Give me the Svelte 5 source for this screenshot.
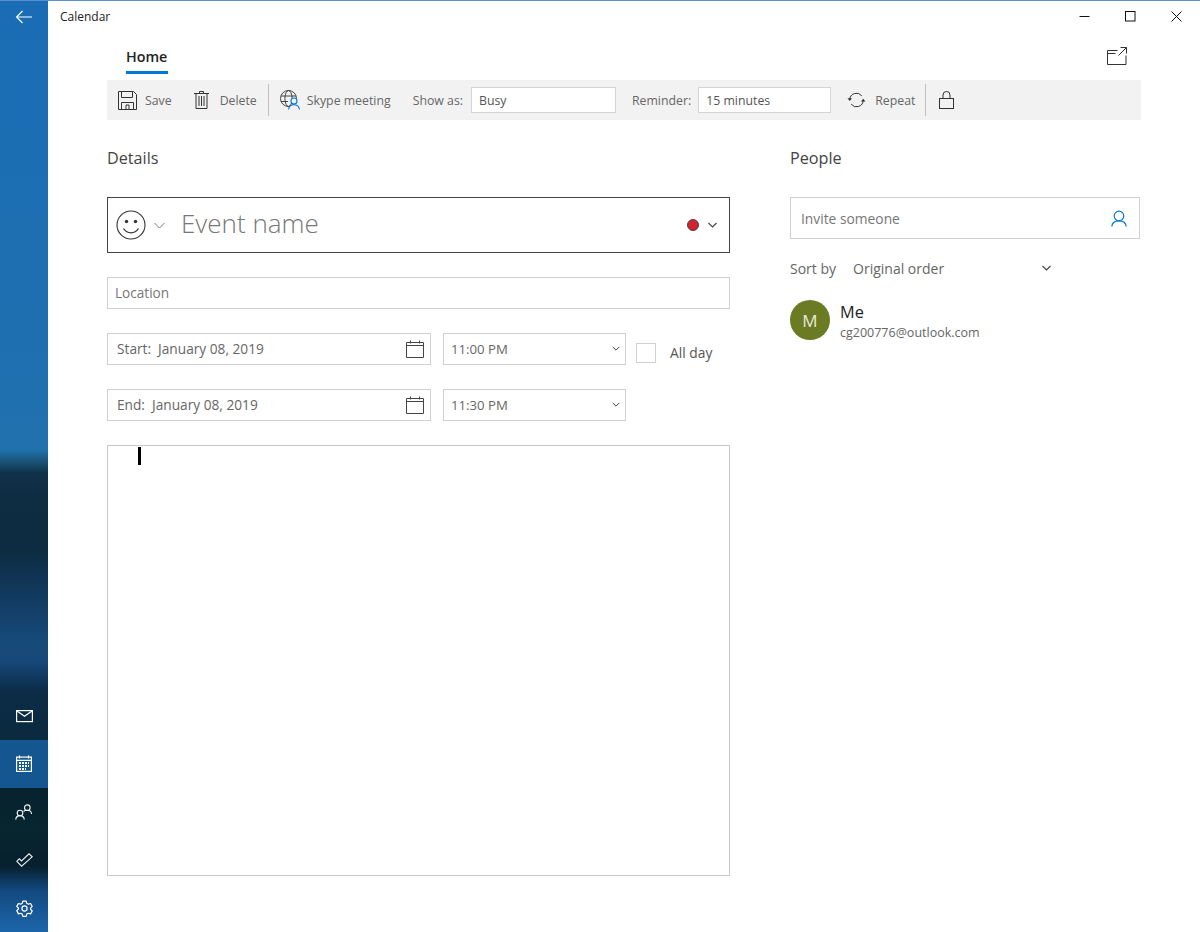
<script>
  const nav = ['mail', 'calendar', 'people', 'tasks', 'settings'];
</script>

<div class="window">
  <aside class="rail">
    <button class="rail-btn back" aria-label="Back">
      <svg width="18" height="14" viewBox="0 0 18 14" fill="none" stroke="#fff" stroke-width="1.1"><path d="M17 7H1.5M7.5 1L1.5 7l6 6" /></svg>
    </button>
    <div class="rail-space"></div>
    {#each nav as item}
      <button class="rail-btn" class:active={item === 'calendar'} aria-label={item}>
        {#if item === 'mail'}
          <svg width="17" height="13" viewBox="0 0 17 13" fill="none" stroke="#fff" stroke-width="1.200"><rect x=".6" y=".6" width="15.800" height="11" /><path d="M1 1l7.500 5.300L16 1" /></svg>
        {:else if item === 'calendar'}
          <svg width="16" height="18" viewBox="0 0 16 18" fill="none" stroke="#fff" stroke-width="1.2"><rect x=".6" y="2.1" width="14.8" height="14.3" /><path d="M.6 5.4h14.8M3.5.5v3M12.5.5v3" /><path stroke-width="2" stroke-dasharray="2 1" d="M3 8h10M3 11h10M3 14h7" /></svg>
        {:else if item === 'people'}
          <svg width="18" height="16" viewBox="0 0 18 16" fill="none" stroke="#eef3f5" stroke-width="1.1"><circle cx="5" cy="9" r="2.8" /><path d="M.7 15.600c.3-2.600 2-4 4.300-4s4 1.400 4.300 4" /><circle cx="12.300" cy="3.700" r="2.800" /><path d="M8.500 7.500c.8-.7 2.200-1.200 3.800-1.200 2.300 0 4 1.400 4.300 3.700" /></svg>
        {:else if item === 'tasks'}
          <svg width="17" height="14" viewBox="0 0 17 14" fill="none" stroke="#eef3f5" stroke-width="1.100"><path d="M.8 8.300l2.500-2.500 2.200 2.200L13 .8l3.200 3L5.600 13.200z" /></svg>
        {:else}
          <svg width="17" height="17" viewBox="0 0 24 24" fill="none" stroke="#fff" stroke-width="1.7" stroke-linejoin="round"><circle cx="12" cy="12" r="3.6" /><path d="M9.6 1.5h4.8l.8 3.2 2.2 1.2 3.2-.9 2.3 4.1-2.3 2.3v1.8l2.3 2.3-2.3 4.1-3.2-.9-2.2 1.2-.8 3.2H9.6l-.8-3.2-2.2-1.2-3.2.9L1.100 15l2.300-2.300v-1.400L1.100 9l2.300-4 3.200.9 2.200-1.200z" /></svg>
        {/if}
      </button>
    {/each}
  </aside>

  <main class="main">
    <header class="titlebar">
      <span class="app-title">Calendar</span>
      <div class="win-controls">
        <svg width="11" height="11" viewBox="0 0 11 11" stroke="#111" fill="none"><path d="M.5 5.500h10" /></svg>
        <svg width="11" height="11" viewBox="0 0 11 11" stroke="#111" fill="none"><rect x=".5" y=".5" width="9.500" height="9.500" /></svg>
        <svg width="11" height="11" viewBox="0 0 11 11" stroke="#111" fill="none"><path d="M.5.500l10 10M10.500.500l-10 10" /></svg>
      </div>
    </header>

    <div class="content">
      <div class="tab-row">
        <span class="tab">Home</span>
        <svg class="popout" width="20" height="18" viewBox="0 0 20 18" fill="none" stroke="#333"><path d="M19 8.500V17.500H.5V3.500h10M.5 6.500h8M13.500.5H19.500V6.500M19.500.5l-8 8" /></svg>
      </div>

      <div class="toolbar">
        <span class="tool save">
          <svg width="19" height="19" viewBox="0 0 19 19" fill="none" stroke="#333"><path d="M.5.500h15l3 3v15H.5zM3.500.5v6h11v-6M3.500 18.500v-7h12v7M8 14h3v4.500H8z" /></svg>
          Save
        </span>
        <span class="tool delete">
          <svg width="15" height="18" viewBox="0 0 15 18" fill="none" stroke="#333"><path d="M0 2.500h15M2 2.500v15h11v-15M5.500 2.500V.5h4v2M5 5v10M7.500 5v10M10 5v10" /></svg>
          Delete
        </span>
        <span class="sep"></span>
        <span class="tool skype">
          <svg width="21" height="20" viewBox="0 0 21 20" fill="none" stroke="#333" stroke-width=".9"><circle cx="8.500" cy="8.500" r="8" /><ellipse cx="8.500" cy="8.500" rx="3.600" ry="8" /><path d="M1 6h15M1 11.500h7" /><circle cx="14" cy="11" r="3" fill="#f2f2f2" stroke="#0078d7" stroke-width="1.100" /><path d="M8.500 19.500c.4-3 2.500-4.800 5.500-4.800s5 1.800 5.500 4.800" fill="#f2f2f2" stroke="#0078d7" stroke-width="1.100" /></svg>
          Skype meeting
        </span>
        <label class="field-label show-label" for="show-as">Show as:</label>
        <input id="show-as" class="tool-input show-input" value="Busy" readonly />
        <label class="field-label rem-label" for="reminder">Reminder:</label>
        <input id="reminder" class="tool-input rem-input" value="15 minutes" readonly />
        <span class="tool repeat">
          <svg width="19" height="16" viewBox="0 0 19 16" fill="none" stroke="#333"><path d="M2.800 8a6.700 6.700 0 0 1 12-4.200M16.200 8a6.700 6.700 0 0 1-12 4.200" /><path d="M.5 6.200h4.500L2.800 9zM14 9.500h4.500L16.200 6.700z" fill="#333" stroke="none" /></svg>
          Repeat
        </span>
        <span class="sep sep2"></span>
        <svg class="lock" width="15" height="18" viewBox="0 0 15 18" fill="none" stroke="#333"><rect x=".5" y="7.500" width="14" height="10" /><path d="M4 7.500V4a3.500 3.500 0 0 1 7 0v3.500" /></svg>
      </div>

      <div class="columns">
        <section class="details">
          <h2>Details</h2>
          <div class="event-box">
            <svg width="30" height="30" viewBox="0 0 30 30" fill="none" stroke="#333" stroke-width="1.100"><circle cx="15" cy="15" r="14" /><circle cx="10.500" cy="11.500" r="1.700" fill="#333" stroke="none" /><circle cx="19.500" cy="11.500" r="1.700" fill="#333" stroke="none" /><path d="M7.500 18.500c2 3 4.500 4.300 7.500 4.300s5.500-1.300 7.500-4.300" stroke-width="1.300" /></svg>
            <svg class="chev-big" width="11" height="7" viewBox="0 0 11 7" fill="none" stroke="#777" stroke-width="1"><path d="M.5 1l5 5 5-5" /></svg>
            <span class="event-name">Event name</span>
            <span class="dot"></span>
            <svg class="chev-dot" width="9" height="6" viewBox="0 0 9 6" fill="none" stroke="#444" stroke-width="1.100"><path d="M.5 1l4 4 4-4" /></svg>
          </div>
          <div class="location">Location</div>

          <div class="date-row">
            <div class="date-field">
              <span class="date-prefix">Start:</span><span class="date-value">January 08, 2019</span>
              <svg class="cal" width="18" height="18" viewBox="0 0 18 18" fill="none" stroke="#444"><path d="M.5 2.500h17v15H.5zM.5 5.500h17M4.500.5v3M13.500.5v3" /></svg>
            </div>
            <div class="time-field">11:00 PM
              <svg class="chev-time" width="8" height="5" viewBox="0 0 9 6" fill="none" stroke="#444" stroke-width="1.200"><path d="M.5 1l4 4 4-4" /></svg>
            </div>
            <span class="checkbox"></span>
            <span class="allday">All day</span>
          </div>

          <div class="date-row">
            <div class="date-field">
              <span class="date-prefix">End:</span><span class="date-value">January 08, 2019</span>
              <svg class="cal" width="18" height="18" viewBox="0 0 18 18" fill="none" stroke="#444"><path d="M.5 2.500h17v15H.5zM.5 5.500h17M4.500.5v3M13.500.5v3" /></svg>
            </div>
            <div class="time-field">11:30 PM
              <svg class="chev-time" width="8" height="5" viewBox="0 0 9 6" fill="none" stroke="#444" stroke-width="1.200"><path d="M.5 1l4 4 4-4" /></svg>
            </div>
          </div>

          <div class="body-box"><span class="caret"></span></div>
        </section>

        <section class="people">
          <h2>People</h2>
          <div class="invite">
            <span>Invite someone</span>
            <svg width="16" height="17" viewBox="0 0 16 17" fill="none" stroke="#0078d7" stroke-width="1.200"><circle cx="8" cy="6" r="4.800" /><path d="M.8 16.500c.3-3.800 3.300-5.700 7.200-5.700s6.900 1.900 7.200 5.700" /></svg>
          </div>
          <div class="sort">
            <span class="sort-label">Sort by</span>
            <span class="sort-value">Original order</span>
            <svg width="9" height="6" viewBox="0 0 9 6" fill="none" stroke="#444" stroke-width="1.200"><path d="M.5 1l4 4 4-4" /></svg>
          </div>
          <div class="person">
            <div class="avatar">M</div>
            <div class="person-text">
              <div class="person-name">Me</div>
              <div class="person-mail">cg200776@outlook.com</div>
            </div>
          </div>
        </section>
      </div>
    </div>
  </main>
</div>

<style>
  :global(body) { margin: 0; background: #fff; }
  .window {
    width: 1200px; height: 932px; display: flex; overflow: hidden;
    font-family: "Open Sans", "Noto Sans", sans-serif; font-size: 12.500px; color: #666;
    box-sizing: border-box; border-top: 1px solid #5a8fd0;
  }
  .rail {
    width: 48px; flex: none; display: flex; flex-direction: column;
    background: linear-gradient(180deg, #1a6db4 0, #1d6fb1 300px, #2071ad 449px, #1a5478 460px, #10324a 472px, #0e2c42 495px, #0d2c42 550px, #123a60 595px, #164a78 640px, #17487a 660px, #0c2c47 690px, #0a2a40 730px, #06222e 790px, #07262f 830px, #06202f 865px, #134a80 890px, #1d66ac 932px);
  }
  .rail-space { flex: 1; }
  .rail-btn {
    width: 48px; height: 48px; padding: 0; border: 0; background: transparent;
    display: flex; align-items: center; justify-content: center; flex: none;
  }
  .rail-btn.back { height: 31px; }
  .rail-btn.active { background: #135690; }
  .main { flex: 1; min-width: 0; display: flex; flex-direction: column; }
  .titlebar { height: 31px; display: flex; align-items: center; justify-content: space-between; flex: none; }
  .app-title { margin-left: 12px; font-size: 12px; color: #222; }
  .win-controls { display: flex; gap: 35px; margin-right: 18px; }
  .content { padding: 0 59px; flex: 1; display: flex; flex-direction: column; }
  .tab-row { height: 48px; display: flex; justify-content: space-between; box-sizing: border-box; flex: none; }
  .tab {
    margin: 15px 0 0 19px; width: 42px; height: 27px; box-sizing: border-box; border-bottom: 3px solid #0078d7;
    font-size: 14.300px; font-weight: 600; color: #222; line-height: 20px;
  }
  .popout { margin: 15px 14px 0 0; }
  .toolbar {
    height: 40px; width: 1034px; background: #f2f2f2; display: flex; align-items: center; flex: none;
    font-size: 12.300px;
  }
  .tool { display: flex; align-items: center; color: #666; white-space: nowrap; }
  .save { margin-left: 11px; gap: 8px; }
  .delete { margin-left: 22px; gap: 11px; }
  .sep { width: 1px; height: 32px; background: #bfbfbf; margin-left: 11px; }
  .skype { margin-left: 11px; gap: 6px; }
  .field-label { color: #666; white-space: nowrap; }
  .show-label { margin-left: 22px; }
  .tool-input {
    height: 26px; box-sizing: border-box; border: 1px solid #d4d4d4; background: #fff; padding: 0 7px;
    font: inherit; color: #555; outline: none;
  }
  .show-input { width: 145px; margin-left: 8px; }
  .rem-label { margin-left: 16px; }
  .rem-input { width: 133px; margin-left: 7px; }
  .repeat { margin-left: 16px; gap: 9px; }
  .sep2 { margin-left: 10px; }
  .lock { margin-left: 13px; }
  .columns { display: grid; grid-template-columns: 623px 350px; column-gap: 60px; }
  h2 { margin: 0; height: 77px; padding-top: 28px; box-sizing: border-box; font-size: 16.200px; font-weight: 400; color: #444; line-height: 20px; }
  .event-box {
    height: 56px; box-sizing: border-box; border: 1px solid #444; display: flex; align-items: center; padding-left: 8px; padding-right: 12px;
  }
  .chev-big { margin-left: 8px; }
  .event-name { margin-left: 16px; flex: 1; font-size: 26px; font-weight: 300; color: #777; line-height: 30px; margin-top: -4px; }
  .dot { width: 12px; height: 12px; border-radius: 50%; background: #d1222f; border: 1px solid #444; box-sizing: border-box; }
  .chev-dot { margin-left: 9px; }
  .location {
    margin-top: 24px; height: 32px; box-sizing: border-box; border: 1px solid #d0d0d0; padding-left: 7px; line-height: 29px; font-size: 13.600px; color: #777;
  }
  .date-row { margin-top: 24px; display: flex; align-items: center; height: 32px; }
  .date-field {
    width: 324px; height: 32px; box-sizing: border-box; border: 1px solid #d0d0d0; display: flex; align-items: center; padding-left: 9px; font-size: 13.700px; color: #666; padding-right: 6px; line-height: 28px; padding-bottom: 1px;
  }
  .date-value { margin-left: 7px; flex: 1; }
  .cal { margin-top: 1px; }
  .time-field {
    width: 183px; height: 32px; box-sizing: border-box; border: 1px solid #d0d0d0; margin-left: 12px; display: flex; align-items: center; justify-content: space-between;
    padding: 0 5px 1px 7px; font-size: 13.200px; color: #666;
  }
  .checkbox { width: 20px; height: 20px; box-sizing: border-box; border: 1px solid #d0d0d0; margin-left: 10px; margin-top: 8px; }
  .allday { margin-left: 14px; font-size: 13.800px; color: #555; margin-top: 6px; }
  .body-box { margin-top: 24px; height: 431px; box-sizing: border-box; border: 1px solid #c8c8c8; padding: 1px 0 0 30px; }
  .caret { display: block; width: 3px; height: 18px; background: #000; }
  .invite {
    height: 42px; box-sizing: border-box; border: 1px solid #d0d0d0; display: flex; align-items: center; justify-content: space-between;
    padding: 0 12px 0 10px; font-size: 13.800px; color: #777;
  }
  .sort { margin-top: 20px; display: flex; align-items: center; font-size: 14px; color: #666; height: 18px; }
  .sort-value { margin-left: 17px; width: 189px; }
  .person { margin-top: 23px; display: flex; align-items: flex-start; gap: 10px; }
  .avatar {
    width: 40px; height: 40px; border-radius: 50%; background: #6b7b23; color: #e8eadb; display: flex; align-items: center; justify-content: center; font-size: 17px;
  }
  .person-text { padding-top: 1px; }
  .person-name { font-size: 16.300px; color: #222; line-height: 22px; }
  .person-mail { font-size: 12.500px; color: #666; line-height: 20px; }
</style>
